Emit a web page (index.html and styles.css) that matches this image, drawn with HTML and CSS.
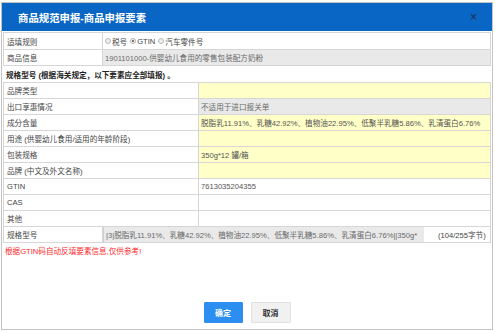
FILE: index.html
```html
<!DOCTYPE html>
<html>
<head>
<meta charset="utf-8">
<link rel="stylesheet" href="styles.css">
</head>
<body>
<div class="dialog">
  <div class="titlebar">
    <span class="title">商品规范申报-商品申报要素</span>
    <span class="close">×</span>
  </div>
  <div class="content">
    <div class="grid">
      <div class="row row-first">
        <div class="lbl narrow">适填规则</div>
        <div class="val radios">
          <span class="radio"></span><span class="rtext">税号</span>
          <span class="radio checked"></span><span class="rtext">GTIN</span>
          <span class="radio"></span><span class="rtext">汽车零件号</span>
        </div>
      </div>
      <div class="row">
        <div class="lbl narrow">商品信息</div>
        <div class="val gray">1901101000-供婴幼儿食用的零售包装配方奶粉</div>
      </div>
    </div>
    <div class="section">规格型号 (根据海关规定，以下要素应全部填报) 。</div>
    <div class="grid">
      <div class="row"><div class="lbl wide">品牌类型</div><div class="val yellow"></div></div>
      <div class="row"><div class="lbl wide">出口享惠情况</div><div class="val gray">不适用于进口报关单</div></div>
      <div class="row"><div class="lbl wide">成分含量</div><div class="val yellow dark">脱脂乳11.91%、乳糖42.92%、植物油22.95%、低聚半乳糖5.86%、乳清蛋白6.76%</div></div>
      <div class="row"><div class="lbl wide">用途 (供婴幼儿食用/适用的年龄阶段)</div><div class="val yellow"></div></div>
      <div class="row"><div class="lbl wide">包装规格</div><div class="val yellow dark">350g*12 罐/箱</div></div>
      <div class="row"><div class="lbl wide">品牌 (中文及外文名称)</div><div class="val yellow"></div></div>
      <div class="row"><div class="lbl wide">GTIN</div><div class="val">7613035204355</div></div>
      <div class="row"><div class="lbl wide">CAS</div><div class="val"></div></div>
      <div class="row"><div class="lbl wide">其他</div><div class="val"></div></div>
      <div class="row">
        <div class="lbl narrow">规格型号</div>
        <div class="val spec">
          <div class="specinput">|3|脱脂乳11.91%、乳糖42.92%、植物油22.95%、低聚半乳糖5.86%、乳清蛋白6.76%||350g*</div>
          <div class="count">(104/255字节)</div>
        </div>
      </div>
    </div>
    <div class="notice">根据GTIN码自动反填要素信息,仅供参考!</div>
  </div>
  <div class="footer">
    <button class="btn primary">确定</button>
    <button class="btn">取消</button>
  </div>
</div>
</body>
</html>
```

FILE: styles.css
```css
html, body {
  margin: 0;
  padding: 0;
  background: #ffffff;
}
body {
  width: 495px;
  height: 332px;
  overflow: hidden;
  font-family: "Liberation Sans", "Noto Sans CJK SC", sans-serif;
  font-size: 7.6px;
  color: #444;
}
.dialog {
  margin: 2px 0 0 1px;
  width: 492px;
  height: 328px;
  box-sizing: border-box;
  border: 1px solid #c4c4c4;
  display: flex;
  flex-direction: column;
  background: #fff;
}
.titlebar {
  height: 28px;
  flex: none;
  background: #0a66c4;
  display: flex;
  align-items: center;
  justify-content: space-between;
  padding: 0 15px 0 16px;
}
.title {
  color: #fff;
  font-weight: bold;
  font-size: 10.4px;
}
.close {
  color: #1e2e48;
  font-size: 12px;
  line-height: 1;
}
.content {
  padding: 1px 1px 0 1px;
}
.grid {
  border-top: 1px solid #d6d6d6;
  border-left: 1px solid #d6d6d6;
  border-right: 1px solid #d6d6d6;
}
.row {
  display: flex;
  height: 16px;
  box-sizing: border-box;
  border-bottom: 1px solid #d6d6d6;
}
.row-first {
  height: 17px;
}
.lbl {
  flex: none;
  box-sizing: border-box;
  border-right: 1px solid #d6d6d6;
  padding-left: 3px;
  display: flex;
  align-items: center;
  white-space: nowrap;
  color: #444;
}
.narrow { width: 99px; }
.wide { width: 195px; }
.val {
  flex: 1;
  min-width: 0;
  display: flex;
  align-items: center;
  padding-left: 2px;
  white-space: nowrap;
  overflow: hidden;
  color: #555;
}
.gray { background: #e9e9e9; color: #6a6a6a; }
.yellow { background: #ffffc8; }
.dark { color: #555; }
.radios { padding-left: 2px; }
.radio {
  width: 6px;
  height: 6px;
  box-sizing: border-box;
  border-radius: 50%;
  border: 1px solid #b8b8b8;
  background: #f0f0f0;
  margin-right: 1px;
  position: relative;
}
.radio.checked::after {
  content: "";
  position: absolute;
  left: 1px;
  top: 1px;
  width: 2px;
  height: 2px;
  border-radius: 50%;
  background: #555;
}
.rtext { margin-right: 3px; color: #444; }
.section {
  height: 16px;
  display: flex;
  align-items: center;
  padding-left: 3px;
  font-weight: bold;
  color: #222;
}
.spec {
  padding-left: 0;
}
.specinput {
  width: 321px;
  flex: none;
  height: 100%;
  box-sizing: border-box;
  background: #e9e9e9;
  border-left: 1px solid #cfcfcf;
  padding-left: 2px;
  display: flex;
  align-items: center;
  overflow: hidden;
  white-space: nowrap;
  color: #6a6a6a;
}
.count {
  padding-left: 14px;
  color: #444;
}
.notice {
  color: #ff2a2a;
  margin-top: 3px;
  padding-left: 2px;
  line-height: 11px;
}
.footer {
  margin-top: auto;
  display: flex;
  justify-content: center;
  gap: 8px;
  padding-bottom: 6px;
}
.btn {
  width: 40px;
  height: 21px;
  font-family: "Liberation Sans", "Noto Sans CJK SC", sans-serif;
  font-size: 8px;
  font-weight: bold;
  border: 1px solid #e0e0e0;
  background: #f1f1f1;
  color: #333;
  border-radius: 1px;
  padding: 0;
}
.btn.primary {
  background: #2b8ef0;
  border-color: #2b8ef0;
  color: #fff;
  width: 39px;
}
```
